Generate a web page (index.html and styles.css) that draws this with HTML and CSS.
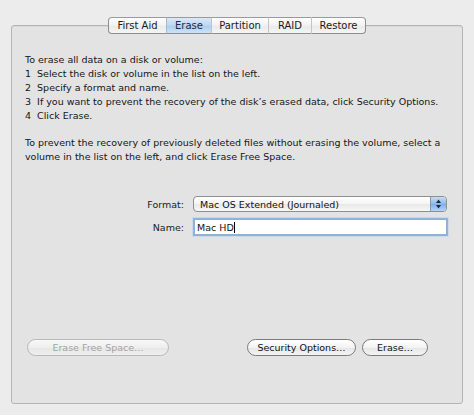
FILE: index.html
```html
<!DOCTYPE html>
<html>
<head>
<meta charset="utf-8">
<link rel="stylesheet" href="styles.css">
</head>
<body>
<div class="window">
  <div class="panel">
    <div class="tabs">
      <div class="tab t1">First Aid</div>
      <div class="tab t2 selected">Erase</div>
      <div class="tab t3">Partition</div>
      <div class="tab t4">RAID</div>
      <div class="tab t5">Restore</div>
    </div>
    <div class="content">
      <p class="para">To erase all data on a disk or volume:<br>1&nbsp;&nbsp;Select the disk or volume in the list on the left.<br>2&nbsp;&nbsp;Specify a format and name.<br>3&nbsp;&nbsp;If you want to prevent the recovery of the disk’s erased data, click Security Options.<br>4&nbsp;&nbsp;Click Erase.</p>
      <p class="para">To prevent the recovery of previously deleted files without erasing the volume, select a volume in the list on the left, and click Erase Free Space.</p>
      <div class="form">
        <div class="row">
          <span class="label">Format:</span>
          <div class="popup">
            <span class="popup-text">Mac OS Extended (Journaled)</span>
            <span class="arrows">
              <svg width="9" height="12" viewBox="0 0 9 12"><path d="M4.5 1.5 L7 5 L2 5 Z" fill="#1c2a44"/><path d="M4.5 10.5 L7 7 L2 7 Z" fill="#1c2a44"/></svg>
            </span>
          </div>
        </div>
        <div class="row row2">
          <span class="label">Name:</span>
          <div class="field"><span class="field-text">Mac HD</span><span class="caret"></span></div>
        </div>
      </div>
      <div class="buttons">
        <div class="btn disabled wide">Erase Free Space…</div>
        <div class="spacer"></div>
        <div class="btn sec">Security Options…</div>
        <div class="btn erase">Erase…</div>
      </div>
    </div>
  </div>
</div>
</body>
</html>
```
FILE: styles.css
```css
html, body {
  margin: 0;
  padding: 0;
}
body {
  width: 474px;
  height: 415px;
  background: #ececec;
  font-family: "DejaVu Sans", "Lucida Grande", sans-serif;
  font-size: 9.5px;
  color: #111;
  overflow: hidden;
}
.window {
  padding: 25px 11px 0 11px;
}
.panel {
  width: 450px;
  height: 377px;
  background: #e3e3e3;
  border: 1px solid #b4b4b4;
  border-radius: 3px;
  box-shadow: inset 0 1px 0 #d8d8d8;
}
.tabs {
  display: flex;
  justify-content: center;
  margin-top: -9px;
  height: 17px;
}
.tab {
  box-sizing: border-box;
  height: 17px;
  line-height: 15px;
  text-align: center;
  background: linear-gradient(#ffffff, #f1f1f1 50%, #e9e9e9 51%, #f5f5f5);
  border-top: 1px solid #9a9a9a;
  border-bottom: 1px solid #8e8e8e;
  border-left: 1px solid #c4c4c4;
  color: #1a1a1a;
  font-size: 10px;
}
.t1 { width: 58px; border-left: 1px solid #8e8e8e; border-radius: 4px 0 0 4px; }
.t2 { width: 45px; }
.t3 { width: 57px; }
.t4 { width: 43px; }
.t5 { width: 55px; border-right: 1px solid #8e8e8e; border-radius: 0 4px 4px 0; }
.tab.selected {
  background: linear-gradient(#dbe9f8, #bcd6f1 50%, #a9cbef 51%, #cfe3f9);
  color: #1c2b4a;
  border-left-color: #a8b8cc;
}
.content {
  padding: 19px 20px 0 13px;
}
.para {
  margin: 0 0 13px 0;
  line-height: 14px;
  color: #151515;
}
.form {
  margin-top: 32px;
}
.row {
  display: flex;
  align-items: center;
}
.row2 {
  margin-top: 6px;
}
.label {
  flex-shrink: 0;
  width: 159px;
  text-align: right;
  color: #222;
  margin-right: 9px;
}
.popup {
  flex-shrink: 0;
  box-sizing: border-box;
  width: 254px;
  height: 16px;
  border: 1px solid #8f8f8f;
  border-radius: 4px;
  background: linear-gradient(#ffffff, #f4f4f4 50%, #e8e8e8 51%, #f7f7f7);
  display: flex;
  align-items: center;
  justify-content: space-between;
  overflow: hidden;
}
.popup-text {
  padding-left: 6px;
  color: #111;
}
.arrows {
  width: 15px;
  height: 14px;
  border-radius: 0 3px 3px 0;
  background: linear-gradient(#c6dcf4, #8fb9e8 50%, #7eadea 51%, #b5d4f8);
  display: flex;
  align-items: center;
  justify-content: center;
  border-left: 1px solid #7f98b8;
}
.field {
  flex-shrink: 0;
  box-sizing: border-box;
  width: 255px;
  height: 18px;
  background: #ffffff;
  border: 2px solid #8eb2d8;
  box-shadow: 0 0 0 1px #c9daed;
  display: flex;
  align-items: center;
  padding-left: 2px;
}
.field-text {
  color: #111;
}
.caret {
  width: 1px;
  height: 11px;
  background: #000;
}
.buttons {
  display: flex;
  align-items: center;
  margin-top: 103px;
  padding-left: 2px;
  padding-right: 14px;
}
.spacer {
  flex: 1;
}
.btn {
  box-sizing: border-box;
  height: 17px;
  line-height: 15px;
  text-align: center;
  border: 1px solid #7a7a7a;
  border-radius: 9px;
  background: linear-gradient(#ffffff, #f3f3f3 50%, #e6e6e6 51%, #f4f4f4);
  color: #111;
  font-size: 9.5px;
}
.wide { width: 142px; }
.sec { width: 109px; }
.erase { width: 66px; margin-left: 6px; }
.btn.disabled {
  color: #a2a2a2;
  border-color: #b8b8b8;
  background: linear-gradient(#f8f8f8, #eeeeee 50%, #e6e6e6 51%, #efefef);
}
```
